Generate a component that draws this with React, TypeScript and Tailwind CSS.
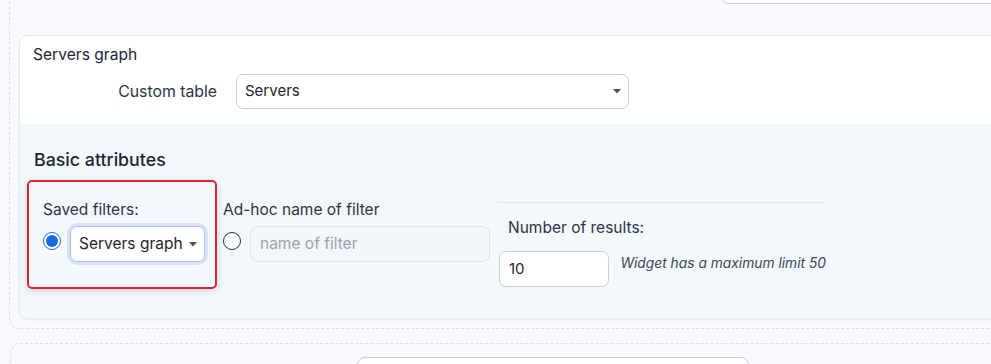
import { FC } from "react";

const Caret: FC = () => (
  <svg width="8" height="5" viewBox="0 0 8 5" className="shrink-0">
    <path d="M0 0 L8 0 L4 4.5 Z" fill="#4a4f57" />
  </svg>
);

const App: FC = () => {
  return (
    <div
      className="w-[991px] h-[364px] overflow-hidden bg-[#f7f9fc] text-[#1f2937]"
      style={{ fontFamily: "Inter, 'Noto Sans', sans-serif" }}
    >
      {/* first widget block */}
      <div className="ml-[9px] mt-[-40px] w-[1100px] border border-dashed border-[#d8dee7] rounded-[10px] pl-[9px] pb-[9px]">
        <div className="h-[40px] flex">
          <div className="ml-[703px] mt-[-10px] w-[380px] h-[53px] border border-[#c4cad3] rounded-[6px] bg-white" />
        </div>
        <div className="h-[34px]" />
        <div className="border border-[#e4e7ee] rounded-[9px] bg-white overflow-hidden shadow-[0_1px_2px_rgba(15,23,42,0.08)]">
          {/* header */}
          <div className="px-[13px] pt-[10px] pb-[15px]">
            <div className="text-[15.6px] leading-[18px] text-[#1c2536]">Servers graph</div>
            <div className="flex items-center mt-[10px]">
              <div className="w-[184px] text-right text-[15.8px] text-[#2b3445]">Custom table</div>
              <div className="ml-[19px] w-[393px] h-[35px] border border-[#c9ced6] rounded-[7px] flex items-center justify-between pl-[8px] pr-[7px]">
                <span className="text-[15px] text-[#1f2530]">Servers</span>
                <Caret />
              </div>
            </div>
          </div>

          {/* basic attributes */}
          <div className="bg-[#f3f8fc] pt-[24px] pb-[29px] pl-[7px]">
            <div className="pl-[7px] text-[17.8px] font-medium leading-[24px] text-[#1c2536]">
              Basic attributes
            </div>
            <div className="flex items-start mt-[8px]">
              {/* saved filters - highlighted */}
              <div className="w-[190px] h-[109px] border-2 border-[#e0232a] rounded-[5px] shadow-[0_2px_8px_rgba(0,0,0,0.14)] pl-[14px] pt-[18px]">
                <div className="text-[15.5px] leading-[20px] text-[#2b3445]">Saved filters:</div>
                <div className="flex items-center mt-[6px]">
                  <span className="w-[18px] h-[18px] rounded-full border-[1.5px] border-[#1769e8] bg-white p-[2px] flex mt-[-6px]">
                    <span className="w-full h-full rounded-full bg-[#1769e8]" />
                  </span>
                  <div className="ml-[9px] w-[135px] h-[36px] rounded-[7px] border border-[#a9c1ea] shadow-[0_0_0_3px_#d6e3f8] bg-white flex items-center justify-between pl-[8px] pr-[7px]">
                    <span className="text-[15.5px] text-[#1f2530] whitespace-nowrap">Servers graph</span>
                    <Caret />
                  </div>
                </div>
              </div>

              {/* ad-hoc */}
              <div className="ml-[6px] pt-[20px]">
                <div className="text-[15.5px] leading-[20px] text-[#2b3445]">Ad-hoc name of filter</div>
                <div className="flex items-center mt-[6px]">
                  <span className="w-[18px] h-[18px] rounded-full border-[1.5px] border-[#2a2f36] bg-white mt-[-6px]" />
                  <div className="ml-[9px] w-[240px] h-[36px] rounded-[7px] border border-[#dde3ea] bg-[#f2f6fa] flex items-center pl-[9px]">
                    <span className="text-[15.5px] text-[#9aa2ad]">name of filter</span>
                  </div>
                </div>
              </div>

              {/* number of results */}
              <div className="ml-[8px] mt-[22px] w-[328px] border-t border-[#dfe4ea] pt-[15px]">
                <div className="pl-[10px] text-[15.5px] leading-[20px] text-[#2b3445]">Number of results:</div>
                <div className="flex items-start mt-[13px]">
                  <div className="ml-[1px] w-[112px] h-[36px] rounded-[7px] border border-[#c9ced6] bg-white flex items-center pl-[9px]">
                    <span className="text-[15px] text-[#1f2530]">10</span>
                  </div>
                  <span className="ml-[11px] mt-[2px] text-[13.8px] italic text-[#3b4658] whitespace-nowrap">
                    Widget has a maximum limit 50
                  </span>
                </div>
              </div>
            </div>
          </div>
        </div>
      </div>

      {/* next widget block */}
      <div className="ml-[10px] mt-[14px] w-[1100px] h-[60px] border border-dashed border-[#d8dee7] rounded-[10px] pt-[13px]">
        <div className="ml-[346px] w-[392px] h-[40px] border border-[#c4cad3] rounded-[8px] bg-white" />
      </div>
    </div>
  );
};

export default App;
